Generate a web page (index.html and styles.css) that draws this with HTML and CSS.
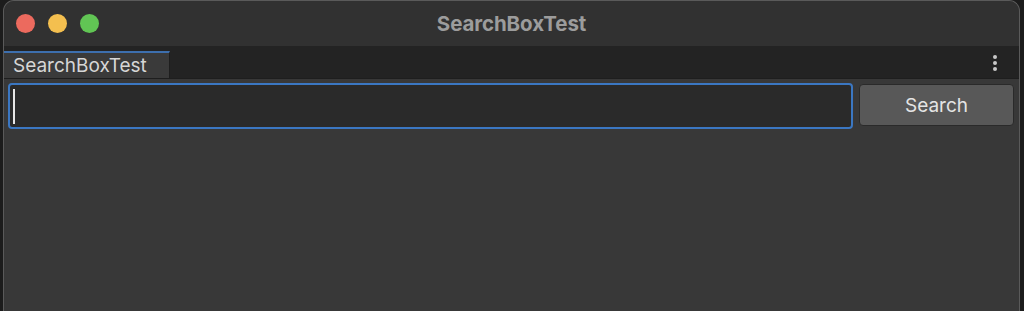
FILE: index.html
```html
<!DOCTYPE html>
<html>
<head>
<meta charset="utf-8">
<link rel="stylesheet" href="styles.css">
</head>
<body>
<div class="window">
  <div class="titlebar">
    <div class="lights">
      <span class="light red"></span>
      <span class="light yellow"></span>
      <span class="light green"></span>
    </div>
    <div class="title">SearchBoxTest</div>
  </div>
  <div class="tabbar">
    <div class="tab">SearchBoxTest</div>
    <div class="kebab"><span></span><span></span><span></span></div>
  </div>
  <div class="content">
    <div class="row">
      <div class="input"><span class="caret"></span></div>
      <button class="btn">Search</button>
    </div>
  </div>
</div>
</body>
</html>
```
FILE: styles.css
```css
html, body {
  margin: 0;
  padding: 0;
  background: #1c1c1c;
  height: 311px;
  overflow: hidden;
  font-family: "Inter", "Liberation Sans", sans-serif;
}
.window {
  margin: 0 4px 0 3px;
  height: 320px;
  border: 1px solid #5a5a5a;
  border-bottom: none;
  border-radius: 11px 11px 0 0;
  background: #383838;
  display: flex;
  flex-direction: column;
  overflow: hidden;
}
.titlebar {
  height: 45px;
  background: #313131;
  position: relative;
  display: flex;
  align-items: center;
}
.lights {
  display: flex;
  gap: 13px;
  padding-left: 12px;
}
.light {
  width: 19px;
  height: 19px;
  border-radius: 50%;
  display: block;
}
.red { background: #ec6a5e; }
.yellow { background: #f4bf4f; }
.green { background: #61c554; }
.title {
  position: absolute;
  left: 0;
  right: 0;
  top: 10px;
  text-align: center;
  color: #9c9c9c;
  font-weight: 700;
  font-size: 20.5px;
  letter-spacing: -0.1px;
}
.tabbar {
  height: 32px;
  background: #232323;
  display: flex;
  align-items: flex-end;
  justify-content: space-between;
  border-bottom: 1px solid #1e1e1e;
}
.tab {
  width: 166px;
  height: 27px;
  box-sizing: border-box;
  background: #3a3a3a;
  border-top: 2px solid #3d6fae;
  border-right: 1px solid #1e1e1e;
  color: #d6d6d6;
  font-size: 19px;
  padding-left: 9px;
  line-height: 26px;
}
.kebab {
  align-self: center;
  display: flex;
  flex-direction: column;
  gap: 2px;
  margin-right: 22px;
  margin-top: 2px;
}
.kebab span {
  width: 4px;
  height: 4px;
  border-radius: 50%;
  background: #c8c8c8;
  display: block;
}
.content {
  flex: 1;
  padding: 4px 5px 0 4px;
}
.row {
  display: flex;
  gap: 6px;
  align-items: flex-start;
}
.input {
  width: 845px;
  height: 46px;
  box-sizing: border-box;
  background: #2a2a2a;
  border: 2px solid #3b77c2;
  border-radius: 4px;
  padding: 4px 0 0 3px;
}
.caret {
  display: block;
  width: 2px;
  height: 35px;
  background: #e6e6e6;
}
.btn {
  margin-top: 1px;
  width: 155px;
  height: 42px;
  background: #585858;
  border: 1px solid #2a2a2a;
  border-radius: 4px;
  color: #e4e4e4;
  font-family: "Inter", "Liberation Sans", sans-serif;
  font-size: 19px;
  padding: 0;
}
```
